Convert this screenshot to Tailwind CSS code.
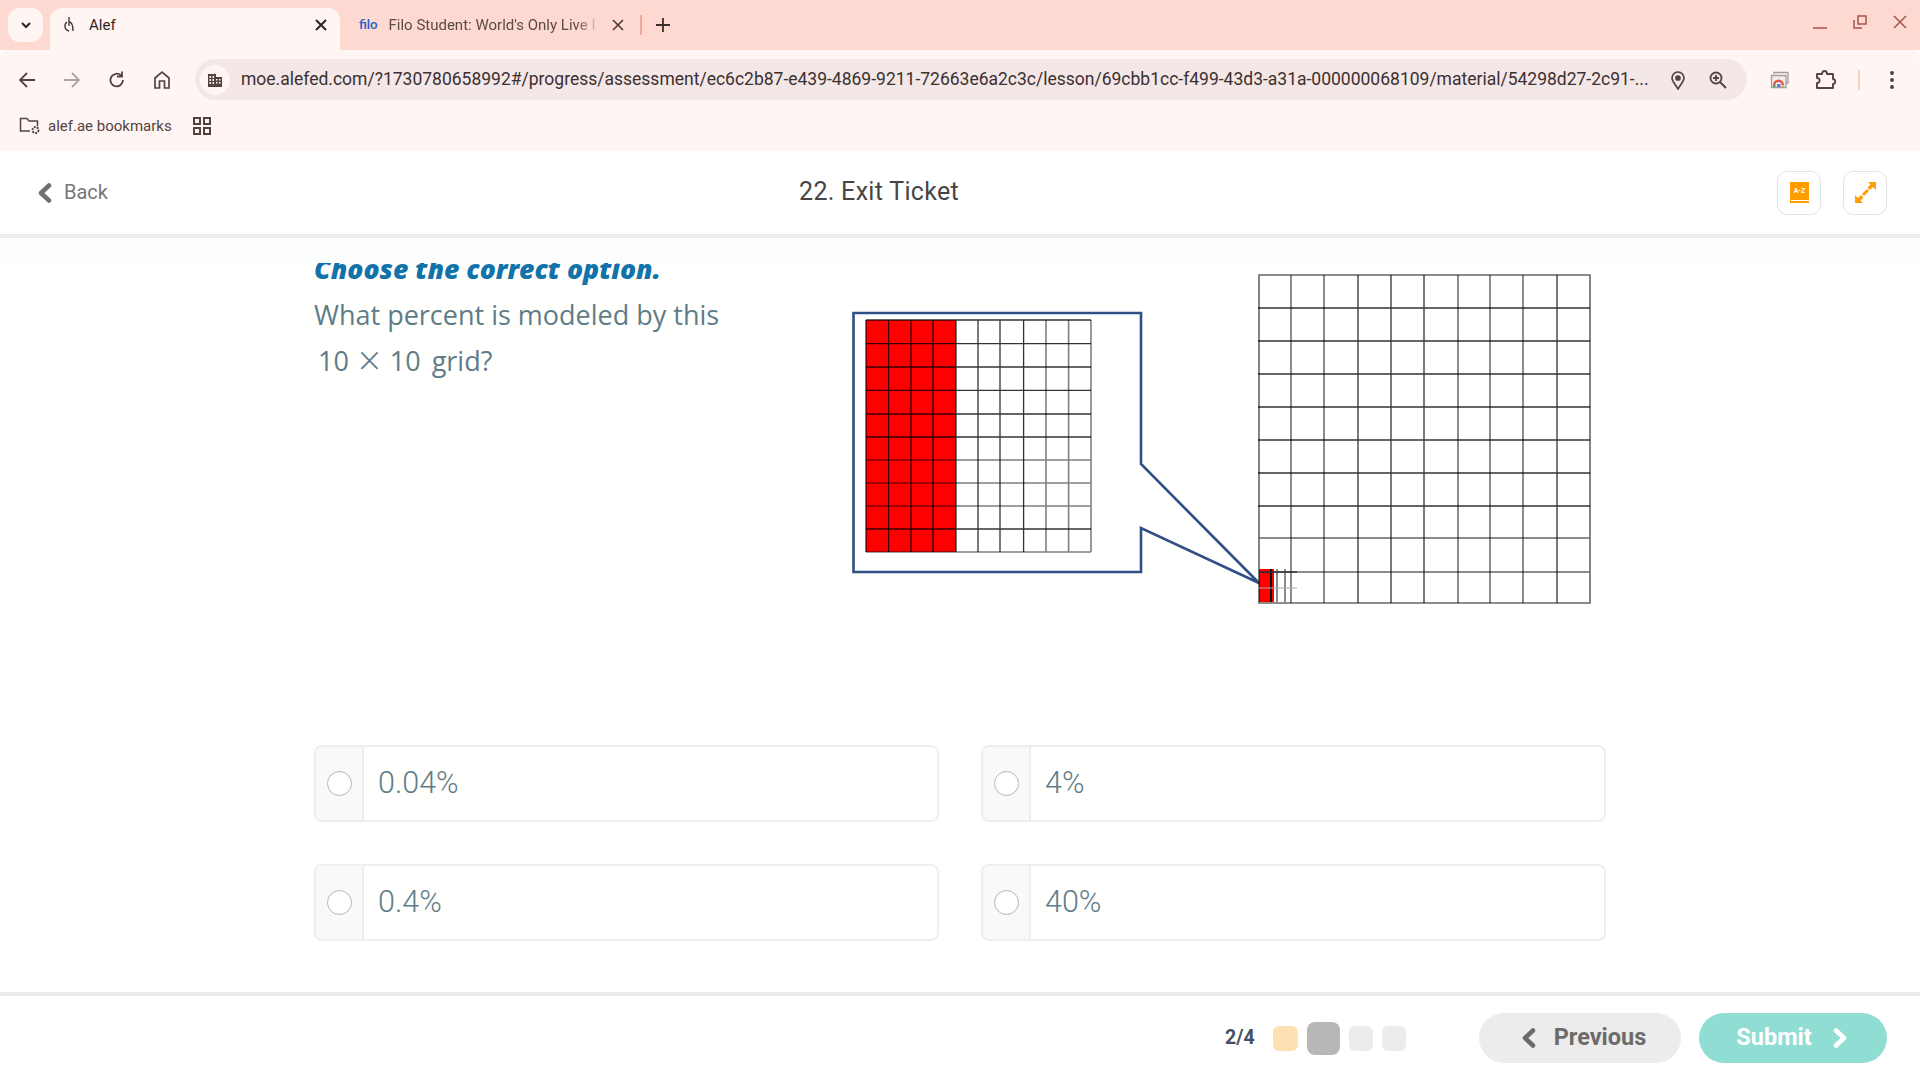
<!DOCTYPE html>
<html lang="en">
<head>
    <meta charset="UTF-8">
    <script src="https://cdn.jsdelivr.net/npm/@tailwindcss/browser@4"></script>
    <title>Alef</title>
</head>
<body class="bg-white font-['Roboto',sans-serif] overflow-hidden">
<div class="flex flex-col w-[1920px] h-[1080px] overflow-hidden">

    <!-- tab strip -->
    <div class="flex items-end h-[50px] bg-[#fed9d2] pl-2 shrink-0">
        <div class="flex items-center justify-center w-[35px] h-[34px] mb-2 rounded-xl bg-[#fff6f4]">
            <svg class="w-3 h-3" viewBox="0 0 12 12" fill="none" stroke="#2d2323" stroke-width="2"><path d="M2 4l4 4 4-4"/></svg>
        </div>
        <div class="flex items-center w-[290px] h-[42px] ml-[7px] pl-[12px] pr-[13px] pb-[8px] rounded-t-xl bg-[#fff6f4] text-[#2d2323]">
            <svg class="w-[16px] h-[20px]" viewBox="0 0 16 20" fill="none" stroke="#3a3030" stroke-width="1.3"><path d="M7 2v9M5 7c-3 2-3 8 2 9M7 7c3 0 4 3 4 9"/></svg>
            <span class="ml-[11px] text-[15px]">Alef</span>
            <svg class="w-[12px] h-[12px] ml-auto" viewBox="0 0 12 12" stroke="#2d2323" stroke-width="2"><path d="M1 1l10 10M11 1L1 11"/></svg>
        </div>
        <div class="flex items-center w-[302px] h-[42px] pl-[19px] pr-[18px] pb-[8px] text-[#5a4a48]">
            <span class="text-[13px] font-bold text-[#2a62c9] font-['Lato',sans-serif]">filo</span>
            <span class="ml-[11px] text-[15px] w-[212px] whitespace-nowrap overflow-hidden [mask-image:linear-gradient(to_right,black_88%,transparent)]">Filo Student: World's Only Live I</span>
            <svg class="w-[12px] h-[12px] ml-auto" viewBox="0 0 12 12" stroke="#4a3a38" stroke-width="1.6"><path d="M1 1l10 10M11 1L1 11"/></svg>
        </div>
        <div class="w-[2px] h-[20px] mb-[15px] -ml-[2px] bg-[#f5a99c]"></div>
        <svg class="w-[14px] h-[14px] mb-[18px] ml-[14px]" viewBox="0 0 14 14" stroke="#3a2e2c" stroke-width="1.8"><path d="M7 0v14M0 7h14"/></svg>
        <div class="flex items-start gap-[26px] ml-auto pr-[13px] pb-[21px]">
            <svg class="w-[14px] h-[14px]" viewBox="0 0 14 14" stroke="#a5544a" stroke-width="1.5"><path d="M0 13h14"/></svg>
            <svg class="w-[14px] h-[14px]" viewBox="0 0 14 14" fill="none" stroke="#a5544a" stroke-width="1.5"><path d="M5 1h8v8H5zM1 5v8h8"/></svg>
            <svg class="w-[14px] h-[14px]" viewBox="0 0 14 14" stroke="#a5544a" stroke-width="1.5"><path d="M1 1l12 12M13 1L1 13"/></svg>
        </div>
    </div>

    <!-- toolbar and bookmarks -->
    <div class="h-[101px] shrink-0 bg-[#fff6f4] rounded-t-lg">
        <div class="flex items-center h-[49px] mt-[5px] pl-[17px]">
            <svg class="w-[20px] h-[20px]" viewBox="0 0 20 20" fill="none" stroke="#544240" stroke-width="1.8"><path d="M18 10H3M10 3l-7 7 7 7"/></svg>
            <svg class="w-[20px] h-[20px] ml-[25px]" viewBox="0 0 20 20" fill="none" stroke="#b0a4a2" stroke-width="1.8"><path d="M2 10h15M10 3l7 7-7 7"/></svg>
            <svg class="w-[20px] h-[20px] ml-[25px]" viewBox="0 0 20 20" fill="none" stroke="#544240" stroke-width="1.8"><path d="M16 10a6.300 6.300 0 1 1-2-4.600M15 1.500V6.500H10" /></svg>
            <svg class="w-[20px] h-[20px] ml-[25px]" viewBox="0 0 20 20" fill="none" stroke="#544240" stroke-width="1.7"><path d="M3 18V8l7-6 7 6v10h-4.500v-7h-5v7z"/></svg>
            <div class="flex items-center w-[1552px] h-[41px] ml-[23px] pl-[5px] rounded-full bg-[#f3e7e7]">
                <div class="flex items-center justify-center w-[30px] h-[30px] rounded-full bg-[#fff6f4]">
                    <svg class="w-[16px] h-[16px]" viewBox="0 0 16 16" fill="#544240"><path d="M1 2h8v3h6v10H1zM2.500 4v2H4V4zm3 0v2H7V4zm-3 3v2H4V7zm3 0v2H7V7zm-3 3v2H4v-2zm3 0v2H7v-2zM9 7v1.500h1.500V7zm3 0v1.500h1.500V7zM9 10v1.500h1.500V10zm3 0v1.500h1.500V10z" fill-rule="evenodd"/></svg>
                </div>
                <span class="ml-[11px] w-[1414px] text-[#3c3030] text-[17.500px] whitespace-nowrap">moe.alefed.com/?1730780658992#/progress/assessment/ec6c2b87-e439-4869-9211-72663e6a2c3c/lesson/69cbb1cc-f499-43d3-a31a-000000068109/material/54298d27-2c91-...</span>
                <svg class="w-[16px] h-[20px] ml-[15px]" viewBox="0 0 16 20" fill="none" stroke="#544240" stroke-width="1.7"><path d="M8 19C5 14 2 11 2 8a6 6 0 0 1 12 0c0 3-3 6-6 11z"/><circle cx="8" cy="8" r="2" fill="#544240"/></svg>
                <svg class="w-[18px] h-[18px] ml-[23px]" viewBox="0 0 18 18" fill="none" stroke="#544240" stroke-width="1.8"><circle cx="7" cy="7" r="5.500"/><path d="M11 11l6 6M4 7h6M7 4v6"/></svg>
            </div>
            <svg class="w-[20px] h-[18px] ml-[23px]" viewBox="0 0 20 18" fill="none"><path d="M4 3V1.500h14V12h-2" stroke="#a89c9a" stroke-width="1.300"/><path d="M1.500 4.500h14.500v12H1.500z" fill="#f3ecea" stroke="#a89c9a" stroke-width="1.300"/><path d="M3 14a5.500 5.500 0 0 1 11 0h-2.500a3 3 0 0 0-6 0z" fill="#e2574a"/><path d="M3 14h2.500v2H3z" fill="#4eaa5b"/><path d="M7 13h3.500v3H7z" fill="#4a82e8"/><path d="M11.500 14H14v2h-2.500z" fill="#f3c02f"/></svg>
            <svg class="w-[21px] h-[21px] ml-[25px]" viewBox="0 0 21 21" fill="none" stroke="#544240" stroke-width="1.900"><path d="M2 5h5c0-4 5-4 5 0h6v5c3 0 3 5 0 5v4H2v-5c3 0 4-5 0-5z" stroke-linejoin="round"/></svg>
            <div class="w-[2px] h-[20px] ml-[22px] bg-[#fbd0c8]"></div>
            <svg class="w-[4px] h-[18px] ml-[30px]" viewBox="0 0 4 18" fill="#544240"><circle cx="2" cy="2" r="2"/><circle cx="2" cy="9" r="2"/><circle cx="2" cy="16" r="2"/></svg>
        </div>
        <div class="flex items-center h-[40px] mt-[2px] pl-[19px]">
            <svg class="w-[22px] h-[18px]" viewBox="0 0 22 18" fill="none" stroke="#544240" stroke-width="1.500"><path d="M11 14H1.500V1.500H8L10 4h8.500v5"/><circle cx="16.500" cy="13" r="3" stroke-width="2" stroke-dasharray="2 1"/></svg>
            <span class="ml-[7px] text-[15px] text-[#544240]">alef.ae bookmarks</span>
            <svg class="w-[18px] h-[18px] ml-[21px]" viewBox="0 0 18 18" fill="none" stroke="#544240" stroke-width="2"><path d="M1 1h6v6H1zM11 1h6v6h-6zM1 11h6v6H1zM11 11h6v6h-6z"/></svg>
        </div>
    </div>

    <!-- lesson header -->
    <div class="relative flex items-center h-[87px] shrink-0 border-b-4 border-[#ececec] pl-[37px] pr-[33px]">
        <svg class="w-[16px] h-[20px]" viewBox="0 0 16 20" fill="none" stroke="#707070" stroke-width="4.500" stroke-linecap="round" stroke-linejoin="round"><path d="M12 2.500L4 10l8 7.500"/></svg>
        <span class="ml-[11px] -mt-[2px] text-[20px] text-[#777]">Back</span>
        <h1 class="absolute left-0 right-[162px] -mt-[2px] text-center text-[25px] text-[#454545] tracking-[0.3px]">22. Exit Ticket</h1>
        <div class="flex items-center justify-center w-[44px] h-[44px] ml-auto border border-[#e3e3e3] rounded-[10px]">
            <svg class="w-[19px] h-[21px]" viewBox="0 0 19 21"><path d="M0 0h19v18H1v1h18v2H0z" fill="#ff9d00"/><text x="9.500" y="11" text-anchor="middle" font-size="7" font-weight="700" fill="#fff" font-family="Roboto">A-Z</text></svg>
        </div>
        <div class="flex items-center justify-center w-[44px] h-[44px] ml-[22px] border border-[#e3e3e3] rounded-[10px]">
            <svg class="w-[21px] h-[21px]" viewBox="0 0 21 21" fill="#ff9d00"><path d="M13 0h8v8l-3-3-3 3-2.500-2.500 3-3zM8 21H0v-8l3 3 3-3 2.500 2.500-3 3z"/><path d="M7 12l5-5 2 2-5 5z"/></svg>
        </div>
    </div>

    <!-- question area -->
    <main class="flex-1 min-h-0 flex flex-col bg-[#fffffe]">
        <div class="h-[25px] shrink-0 bg-[#fbfefd]"></div>
        <div class="flex-1 min-h-0 overflow-hidden">
            <div class="w-[1292px] mx-auto">
                <div class="flex h-[350px]">
                    <div class="w-[526px] shrink-0 font-['Open_Sans',sans-serif]">
                        <p class="-mt-[10px] h-[32px] leading-[32px] text-[26.600px] font-extrabold italic text-[#1272aa] whitespace-nowrap">Choose the correct option.</p>
                        <p class="mt-[7px] leading-[46px] text-[27px] text-[#5f7c89]">What percent is modeled by this<br><span class="ml-[4px]">10</span><span class="relative top-[4px] mx-[9px] text-[40px] font-light leading-[30px]">×</span><span>10</span><span class="ml-[11px]">grid?</span></p>
                    </div>
                    <svg class="w-[766px] h-[350px] shrink-0" viewBox="840 263 766 350" fill="none">
                        <path d="M853.500 313H1141V464L1259 583L1141 528V572H853.500Z" fill="#fff" stroke="#2f4f86" stroke-width="2.600"/>
                        <rect x="866" y="320" width="90" height="232" fill="#ff0000"/>
                        <rect x="1259" y="569" width="15" height="33" fill="#ff0000"/>
                        <path d="M866 320V552M888.600 320V552M911 320V552M933 320V552M956 320V552M978 320V552M1000 320V552M1023.600 320V552M866 320H1091M866 343.700H1091M866 367H1091M866 390.300H1091M866 414H1091M866 437H1091M866 529H1091" stroke="#000" stroke-opacity="0.8" stroke-width="1.300"/>
                        <path d="M1046 320V552M1068.600 320V552M1091 320V552M866 552H1091M866 460H1091M866 483H1091M866 506H1091" stroke="#000" stroke-opacity="0.5" stroke-width="1.600"/>
                        <path d="M1358 275V603M1391 275V603M1424 275V603M1557 275V603M1258 308H1590M1258 341H1590M1258 374H1590M1258 407H1590M1258 440H1590M1258 473H1590M1258 506H1590" stroke="#000" stroke-opacity="0.8" stroke-width="1.300"/>
                        <path d="M1291 275V603M1324 275V603M1458 275V603M1490 275V603M1523 275V603" stroke="#000" stroke-opacity="0.45" stroke-width="2"/>
                        <path d="M1259 275H1590V603H1259ZM1258 538H1590M1258 572H1590" stroke="#000" stroke-opacity="0.6" stroke-width="1.600"/>
                        <path d="M1271 569V602" stroke="#111" stroke-width="2"/>
                        <path d="M1277 569V602M1285 569V602" stroke="#666" stroke-width="1.500"/>
                        <path d="M1259 572H1297" stroke="#333" stroke-width="1.500"/>
                        <path d="M1259 588H1297" stroke="#aaa" stroke-width="1"/>
                    </svg>
                </div>
                <div class="grid grid-cols-2 gap-x-[42px] gap-y-[42.500px] mt-[132px] font-['Roboto',sans-serif] font-light text-[30.500px] text-[#5f7c89]">
                    <div class="flex h-[76.500px] rounded-lg border-2 border-[#eeeeee] overflow-hidden">
                        <div class="flex items-center justify-center w-[48px] border-r-2 border-[#eeeeee] bg-[#f9f9f9]"><span class="w-[25px] h-[25px] rounded-full border border-[#b5b5b5] bg-white"></span></div>
                        <div class="flex items-center pl-[14px]">0.04%</div>
                    </div>
                    <div class="flex h-[76.500px] rounded-lg border-2 border-[#eeeeee] overflow-hidden">
                        <div class="flex items-center justify-center w-[48px] border-r-2 border-[#eeeeee] bg-[#f9f9f9]"><span class="w-[25px] h-[25px] rounded-full border border-[#b5b5b5] bg-white"></span></div>
                        <div class="flex items-center pl-[14px]">4%</div>
                    </div>
                    <div class="flex h-[76.500px] rounded-lg border-2 border-[#eeeeee] overflow-hidden">
                        <div class="flex items-center justify-center w-[48px] border-r-2 border-[#eeeeee] bg-[#f9f9f9]"><span class="w-[25px] h-[25px] rounded-full border border-[#b5b5b5] bg-white"></span></div>
                        <div class="flex items-center pl-[14px]">0.4%</div>
                    </div>
                    <div class="flex h-[76.500px] rounded-lg border-2 border-[#eeeeee] overflow-hidden">
                        <div class="flex items-center justify-center w-[48px] border-r-2 border-[#eeeeee] bg-[#f9f9f9]"><span class="w-[25px] h-[25px] rounded-full border border-[#b5b5b5] bg-white"></span></div>
                        <div class="flex items-center pl-[14px]">40%</div>
                    </div>
                </div>
            </div>
        </div>
    </main>

    <!-- footer -->
    <footer class="flex items-center h-[88px] shrink-0 border-t-4 border-[#ececec]">
        <span class="ml-[1225px] w-[30px] text-[19.500px] font-bold text-[#454f63]">2/4</span>
        <span class="w-[25px] h-[25px] ml-[18px] rounded-md bg-[#ffe0b2]"></span>
        <span class="w-[33px] h-[33px] ml-[9px] rounded-lg bg-[#b7b7b7]"></span>
        <span class="w-[24px] h-[25px] ml-[9px] rounded-md bg-[#ececec]"></span>
        <span class="w-[24px] h-[25px] ml-[9px] rounded-md bg-[#ececec]"></span>
        <button class="flex items-center justify-center w-[202px] h-[50px] ml-[73px] pl-[7px] rounded-full bg-[#ececec] text-[23.500px] font-bold text-[#6b6b6b]">
            <svg class="w-[16px] h-[20px] mr-[17px]" viewBox="0 0 16 20" fill="none" stroke="#6b6b6b" stroke-width="4.500" stroke-linecap="round" stroke-linejoin="round"><path d="M12 2.500L4 10l8 7.500"/></svg>
            Previous
        </button>
        <button class="flex items-center justify-center w-[188px] h-[50px] ml-[18px] pr-[2px] rounded-full bg-[#90ddd3] text-[23.500px] font-bold text-white">
            Submit
            <svg class="w-[16px] h-[20px] ml-[20px]" viewBox="0 0 16 20" fill="none" stroke="#fff" stroke-width="4.500" stroke-linecap="round" stroke-linejoin="round"><path d="M4 2.500L12 10l-8 7.500"/></svg>
        </button>
    </footer>
</div>
</body>
</html>
